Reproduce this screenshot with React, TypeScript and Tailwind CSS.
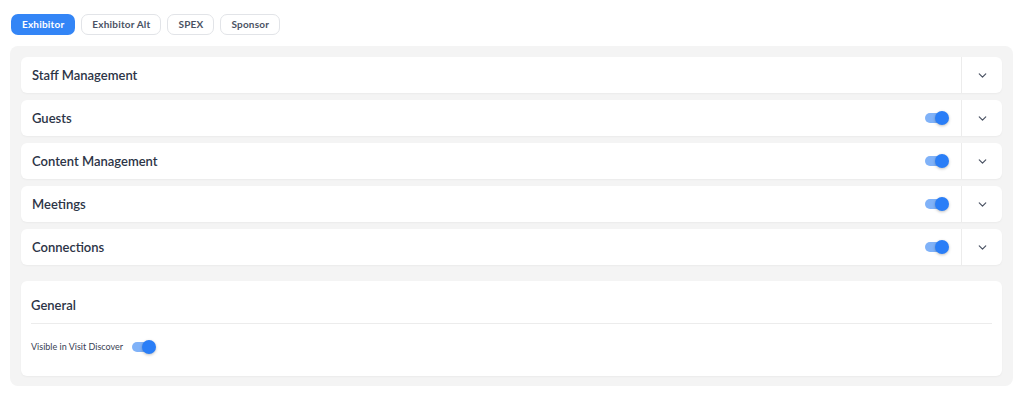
import { ChevronDown } from "lucide-react";

const tabs = ["Exhibitor", "Exhibitor Alt", "SPEX", "Sponsor"];

const sections = [
  { title: "Staff Management", toggle: false },
  { title: "Guests", toggle: true },
  { title: "Content Management", toggle: true },
  { title: "Meetings", toggle: true },
  { title: "Connections", toggle: true },
];

function Toggle() {
  return (
    <div className="relative w-[24px] h-[14px] flex items-center">
      <div className="w-[21px] h-[10px] rounded-full bg-[#80b2f8]" />
      <div className="absolute right-0 top-0 w-[14px] h-[14px] rounded-full bg-[#2a7ef7] shadow-[0_1px_3px_rgba(0,0,0,0.25)]" />
    </div>
  );
}

export default function App() {
  return (
    <div
      className="w-[1024px] h-[402px] bg-white px-[10px] pt-[14px] text-[#2c3446]"
      style={{ fontFamily: "Lato, 'Noto Sans', sans-serif" }}
    >
      <div className="flex gap-[6px] ml-[1px]">
        {tabs.map((t, i) => (
          <button
            key={t}
            className={
              i === 0
                ? "h-[21px] px-[11px] rounded-[7px] bg-[#3385f6] text-white text-[10px] font-bold tracking-[0.2px]"
                : "h-[21px] px-[10px] rounded-[7px] border border-[#e2e4e8] bg-white text-[#4a5263] text-[10px] font-bold tracking-[0.2px]"
            }
          >
            {t}
          </button>
        ))}
      </div>

      <div className="mt-[11px] w-[1003px] h-[340px] rounded-[8px] bg-[#f4f4f4] px-[11px] pt-[11px] flex flex-col gap-[7px]">
        {sections.map((s) => (
          <div
            key={s.title}
            className="h-[36px] rounded-[6px] bg-white flex items-center shadow-[0_1px_2px_rgba(0,0,0,0.04)]"
          >
            <div className="flex-1 pl-[11px] pt-[2px] text-[13px] font-semibold">{s.title}</div>
            {s.toggle && (
              <div className="mr-[12px]">
                <Toggle />
              </div>
            )}
            <div className="w-[41px] h-full border-l border-[#ececec] flex items-center justify-center">
              <ChevronDown size={13} strokeWidth={2.2} className="text-[#4a5263]" />
            </div>
          </div>
        ))}

        <div className="mt-[9px] h-[95px] rounded-[6px] bg-white px-[10px] pt-[16px] shadow-[0_1px_2px_rgba(0,0,0,0.04)]">
          <div className="text-[13px] font-semibold leading-[16px]">General</div>
          <div className="mt-[10px] border-t border-[#ececec]" />
          <div className="mt-[16px] flex items-center gap-[9px]">
            <span className="text-[9px] text-[#3a4254]">Visible in Visit Discover</span>
            <Toggle />
          </div>
        </div>
      </div>
    </div>
  );
}
